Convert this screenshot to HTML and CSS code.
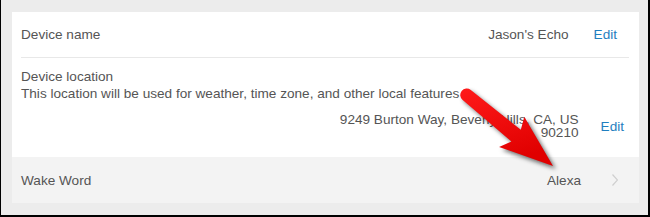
FILE: index.html
```html
<!DOCTYPE html>
<html lang="en">
<head>
    <meta charset="UTF-8">
    <title>Device settings</title>
    <link rel="stylesheet" href="styles.css">
</head>
<body>
    <div class="frame">
        <div class="card">
            <div class="rows">
                <div class="row row-name">
                    <span class="label">Device name</span>
                    <span class="value">Jason's Echo</span>
                    <a class="edit edit-name">Edit</a>
                </div>
                <div class="row row-location">
                    <div class="label">Device location</div>
                    <div class="desc">This location will be used for weather, time zone, and other local features</div>
                    <div class="loc-value">
                        <div class="address">9249 Burton Way, Beverly Hills, CA, US<br>90210</div>
                        <a class="edit edit-loc">Edit</a>
                    </div>
                </div>
            </div>
            <div class="wake">
                <span class="label">Wake Word</span>
                <span class="value">Alexa</span>
                <svg class="chevron" width="6" height="12" viewBox="0 0 6 12">
                    <path d="M0.5 0.5 L5.5 6 L0.5 11.5" fill="none" stroke="#cfcfcf" stroke-width="1.2"/>
                </svg>
            </div>
        </div>

        <!-- red pointer arrow drawn over the card -->
        <svg class="arrow" width="650" height="217" viewBox="0 0 650 217">
            <defs>
                <filter id="blur" x="-20%" y="-20%" width="140%" height="140%">
                    <feGaussianBlur stdDeviation="2"/>
                </filter>
                <linearGradient id="red" x1="0" y1="0" x2="0.4" y2="1">
                    <stop offset="0" stop-color="#ff1a1a"/>
                    <stop offset="1" stop-color="#e00000"/>
                </linearGradient>
            </defs>
            <path transform="translate(3,3)" filter="url(#blur)" fill="rgba(0,0,0,0.55)"
                  d="M470.8 89.9 L520.8 129.8 L524.3 116.8 L553 166 L499.1 147 L511.4 141.6 L462.7 100.1 A6.5 6.5 0 0 1 470.8 89.9 Z"/>
            <path fill="url(#red)"
                  d="M470.8 89.9 L520.8 129.8 L524.3 116.8 L553 166 L499.1 147 L511.4 141.6 L462.7 100.1 A6.5 6.5 0 0 1 470.8 89.9 Z"/>
        </svg>
    </div>
</body>
</html>
```

FILE: styles.css
```css
body {
    margin: 0;
    font-family: 'Liberation Sans', Arial, sans-serif;
    font-size: 13.6px;
    color: #555;
}
.frame {
    position: relative;
    width: 650px;
    height: 217px;
    box-sizing: border-box;
    background-color: #ececec;
    border-left: 1px solid #000;
    border-right: 2px solid #000;
    border-bottom: 2px solid #000;
    padding: 12px 9px 0 11px;
    overflow: hidden;
}
.card {
    background-color: #fff;
}
.rows {
    padding: 0 10px 0 9px;
}
.row {
    border-bottom: 1px solid #e8e8e8;
}
.row-name {
    display: flex;
    align-items: center;
    height: 45px;
    padding-right: 12px;
}
.row-name .label {
    flex: 1;
}
.value {
    color: #555;
}
.edit {
    color: #1f7fc0;
    cursor: pointer;
}
.edit-name {
    margin-left: 25px;
}
.row-location {
    border-bottom: none;
    padding: 10px 5px 18px 0;
    line-height: 17px;
}
.desc {
    white-space: nowrap;
}
.loc-value {
    display: flex;
    justify-content: flex-end;
    align-items: center;
    margin-top: 11px;
}
.address {
    text-align: right;
    line-height: 13px;
}
.edit-loc {
    margin-left: 22px;
}
.wake {
    display: flex;
    align-items: center;
    height: 46px;
    padding: 0 21px 0 9px;
    background-color: #f3f3f3;
}
.wake .label {
    flex: 1;
}
.chevron {
    margin-left: 31px;
}
.arrow {
    position: absolute;
    left: -1px;
    top: 0;
}
```
